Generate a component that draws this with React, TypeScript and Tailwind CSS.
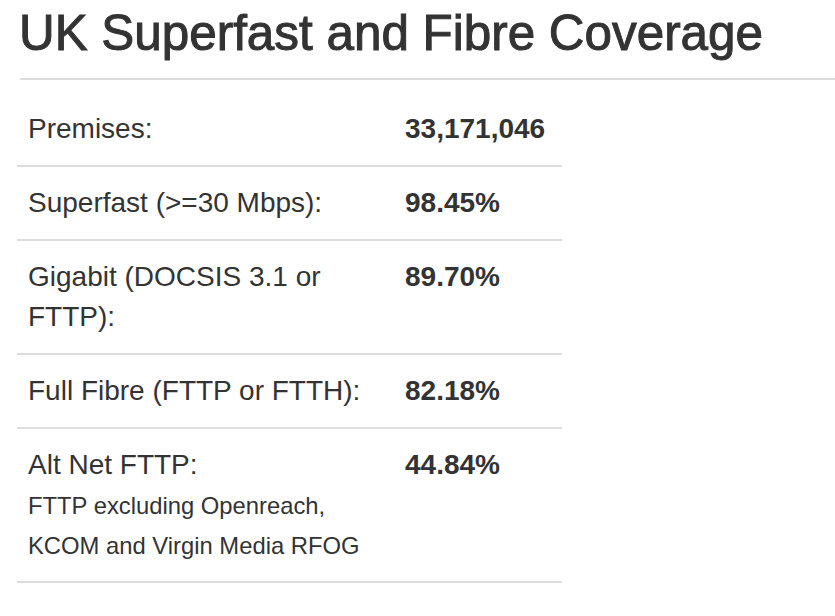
const rows = [
  { label: 'Premises:', value: '33,171,046' },
  { label: 'Superfast (>=30 Mbps):', value: '98.45%' },
  { label: 'Gigabit (DOCSIS 3.1 or FTTP):', value: '89.70%' },
  { label: 'Full Fibre (FTTP or FTTH):', value: '82.18%' },
  {
    label: 'Alt Net FTTP:',
    value: '44.84%',
    note: ['FTTP excluding Openreach,', 'KCOM and Virgin Media RFOG'],
  },
];

export default function App() {
  return (
    <div className="min-h-screen bg-white pl-[17px] text-[#333] font-['Liberation_Sans',Arial,sans-serif]">
      <h1 className="mt-[6px] pl-[2px] text-[49.4px] leading-[54px] font-normal [-webkit-text-stroke:1px_#333]">
        UK Superfast and Fibre Coverage
      </h1>
      <hr className="mt-[18px] ml-[3px] border-t-2 border-[#dddddd]" />

      <table className="mt-[13px] w-[545px] table-fixed border-collapse text-[28px] leading-[40px]">
        <colgroup>
          <col className="w-[377px]" />
          <col />
        </colgroup>
        <tbody>
          {rows.map((r) => (
            <tr key={r.label} className="border-b-2 border-[#dddddd]">
              <td className="align-top pl-[11px] pr-[11px] pt-[16px] pb-[16px]">
                {r.label}
                {r.note &&
                  r.note.map((n) => (
                    <span key={n}>
                      <br />
                      <small className="text-[23.8px] leading-none">{n}</small>
                    </span>
                  ))}
              </td>
              <td className="align-top pl-[11px] pr-[11px] pt-[16px] pb-[16px] font-bold">{r.value}</td>
            </tr>
          ))}
        </tbody>
      </table>
    </div>
  );
}
